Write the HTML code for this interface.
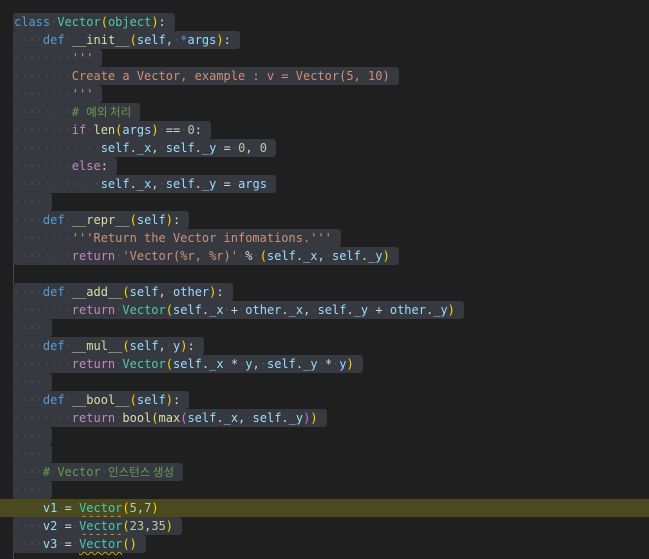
<!DOCTYPE html>
<html><head><meta charset="utf-8"><style>
html,body{margin:0;padding:0;background:#1f1f1f;width:649px;height:559px;overflow:hidden}
#ed{position:absolute;left:0;top:13px;width:649px;font-family:"DejaVu Sans Mono","Liberation Mono","Noto Sans CJK KR",monospace;font-size:12px;color:#d4d4d4}
.l{height:18px;line-height:19px;white-space:pre;position:relative}
.s{background:#363a40;padding:0 9px 0 1px;margin-left:13px;border-radius:3px;display:inline-block;height:18px}
.hl{background:#4a4a1e}
.hl .s{background:transparent}
.d{color:#4a4d52}
.k{color:#569cd6}.c{color:#4ec9b0}.p{color:#ffd700}.p2{color:#da70d6}.v{color:#9cdcfe}.f{color:#dcdcaa}
.st{color:#ce9178}.cm{color:#6a9955}.kw{color:#c586c0}.n{color:#b5cea8}
.kr{font-family:"Noto Sans CJK KR",sans-serif;font-size:11.5px}
.w{text-decoration:underline wavy #c8a500;text-underline-offset:3px;text-decoration-thickness:1px}
#bar{position:absolute;left:13px;top:31px;width:1px;height:528px;background:#45474b}
</style></head><body>
<div id="bar"></div>
<div id="ed">
<div class="l"><span class="s"><span class="k">class</span><span class="d">·</span><span class="c">Vector</span><span class="p">(</span><span class="c">object</span><span class="p">)</span>:</span></div>
<div class="l"><span class="s"><span class="d">····</span><span class="k">def</span><span class="d">·</span><span class="f">__init__</span><span class="p">(</span><span class="v">self</span>,<span class="d">·</span><span class="k">*</span><span class="v">args</span><span class="p">)</span>:</span></div>
<div class="l"><span class="s"><span class="d">········</span><span class="st">'''</span></span></div>
<div class="l"><span class="s"><span class="d">········</span><span class="st">Create a Vector, example : v = Vector(5, 10)</span></span></div>
<div class="l"><span class="s"><span class="d">········</span><span class="st">'''</span></span></div>
<div class="l"><span class="s"><span class="d">········</span><span class="cm"># <span class="kr">예외 처리</span></span></span></div>
<div class="l"><span class="s"><span class="d">········</span><span class="kw">if</span><span class="d">·</span><span class="f">len</span><span class="p">(</span><span class="v">args</span><span class="p">)</span><span class="d">·</span>==<span class="d">·</span><span class="n">0</span>:</span></div>
<div class="l"><span class="s"><span class="d">············</span><span class="v">self</span>.<span class="v">_x</span>,<span class="d">·</span><span class="v">self</span>.<span class="v">_y</span><span class="d">·</span>=<span class="d">·</span><span class="n">0</span>,<span class="d">·</span><span class="n">0</span></span></div>
<div class="l"><span class="s"><span class="d">········</span><span class="kw">else</span>:</span></div>
<div class="l"><span class="s"><span class="d">············</span><span class="v">self</span>.<span class="v">_x</span>,<span class="d">·</span><span class="v">self</span>.<span class="v">_y</span><span class="d">·</span>=<span class="d">·</span><span class="v">args</span></span></div>
<div class="l"><span class="s"><span class="d">····</span></span></div>
<div class="l"><span class="s"><span class="d">····</span><span class="k">def</span><span class="d">·</span><span class="f">__repr__</span><span class="p">(</span><span class="v">self</span><span class="p">)</span>:</span></div>
<div class="l"><span class="s"><span class="d">········</span><span class="st">'''Return the Vector infomations.'''</span></span></div>
<div class="l"><span class="s"><span class="d">········</span><span class="kw">return</span><span class="d">·</span><span class="st">'Vector(%r, %r)'</span><span class="d">·</span>%<span class="d">·</span><span class="p">(</span><span class="v">self</span>.<span class="v">_x</span>,<span class="d">·</span><span class="v">self</span>.<span class="v">_y</span><span class="p">)</span></span></div>
<div class="l"></div>
<div class="l"><span class="s"><span class="d">····</span><span class="k">def</span><span class="d">·</span><span class="f">__add__</span><span class="p">(</span><span class="v">self</span>,<span class="d">·</span><span class="v">other</span><span class="p">)</span>:</span></div>
<div class="l"><span class="s"><span class="d">········</span><span class="kw">return</span><span class="d">·</span><span class="c">Vector</span><span class="p">(</span><span class="v">self</span>.<span class="v">_x</span><span class="d">·</span>+<span class="d">·</span><span class="v">other</span>.<span class="v">_x</span>,<span class="d">·</span><span class="v">self</span>.<span class="v">_y</span><span class="d">·</span>+<span class="d">·</span><span class="v">other</span>.<span class="v">_y</span><span class="p">)</span></span></div>
<div class="l"><span class="s"><span class="d">····</span></span></div>
<div class="l"><span class="s"><span class="d">····</span><span class="k">def</span><span class="d">·</span><span class="f">__mul__</span><span class="p">(</span><span class="v">self</span>,<span class="d">·</span><span class="v">y</span><span class="p">)</span>:</span></div>
<div class="l"><span class="s"><span class="d">········</span><span class="kw">return</span><span class="d">·</span><span class="c">Vector</span><span class="p">(</span><span class="v">self</span>.<span class="v">_x</span><span class="d">·</span>*<span class="d">·</span><span class="v">y</span>,<span class="d">·</span><span class="v">self</span>.<span class="v">_y</span><span class="d">·</span>*<span class="d">·</span><span class="v">y</span><span class="p">)</span></span></div>
<div class="l"><span class="s"><span class="d">····</span></span></div>
<div class="l"><span class="s"><span class="d">····</span><span class="k">def</span><span class="d">·</span><span class="f">__bool__</span><span class="p">(</span><span class="v">self</span><span class="p">)</span>:</span></div>
<div class="l"><span class="s"><span class="d">········</span><span class="kw">return</span><span class="d">·</span><span class="f">bool</span><span class="p">(</span><span class="f">max</span><span class="p2">(</span><span class="v">self</span>.<span class="v">_x</span>,<span class="d">·</span><span class="v">self</span>.<span class="v">_y</span><span class="p2">)</span><span class="p">)</span></span></div>
<div class="l"><span class="s"><span class="d">····</span></span></div>
<div class="l"><span class="s"><span class="d">····</span></span></div>
<div class="l"><span class="s"><span class="d">····</span><span class="cm">#<span class="d">·</span>Vector<span class="d">·</span><span class="kr">인스턴스 생성</span></span></span></div>
<div class="l"><span class="s"><span class="d">····</span></span></div>
<div class="l hl"><span class="s"><span class="d">····</span><span class="v">v1</span><span class="d">·</span>=<span class="d">·</span><span class="c w">Vector</span><span class="p">(</span><span class="n">5</span>,<span class="n">7</span><span class="p">)</span></span></div>
<div class="l"><span class="s"><span class="d">····</span><span class="v">v2</span><span class="d">·</span>=<span class="d">·</span><span class="c w">Vector</span><span class="p">(</span><span class="n">23</span>,<span class="n">35</span><span class="p">)</span></span></div>
<div class="l"><span class="s"><span class="d">····</span><span class="v">v3</span><span class="d">·</span>=<span class="d">·</span><span class="c w">Vector</span><span class="p">()</span></span></div>
</div>
</body></html>
